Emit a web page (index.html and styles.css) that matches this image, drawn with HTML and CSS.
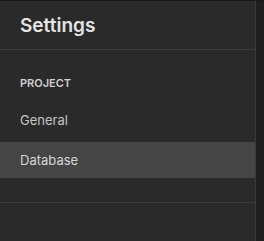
FILE: index.html
```html
<!DOCTYPE html>
<html lang="en">

<head>
    <meta charset="utf-8">
    <meta name="viewport" content="width=device-width, initial-scale=1.0">
    <title>Settings</title>
    <link rel="stylesheet" href="styles.css">
</head>

<body>

    <aside class="sidebar">
        <header class="sidebar_header">
            <h1>Settings</h1>
        </header>

        <nav class="menu">
            <h2 class="menu_label">Project</h2>
            <a class="menu_item" href="#">General</a>
            <a class="menu_item valgt" href="#">Database</a>
        </nav>
    </aside>

    <main class="content"></main>

</body></html>
```

FILE: styles.css
```css
* {
    box-sizing: border-box;
}

body {
    margin: 0;
    display: flex;
    min-height: 100vh;
    background: #1f1f1f;
    border-top: 1px solid #1a1a1a;
    font-family: 'Inter', sans-serif;
}

.sidebar {
    width: 256px;
    flex-shrink: 0;
    background: #2a2a2a;
    border-right: 1px solid #3b3b3b;
}

.sidebar_header {
    height: 49px;
    padding: 0 20px;
    display: flex;
    align-items: center;
    border-bottom: 1px solid #3b3b3b;
}

h1 {
    margin: 0;
    font-size: 19px;
    font-weight: 600;
    color: #e4e4e4;
}

.menu {
    display: flex;
    flex-direction: column;
    gap: 4px;
    padding: 25px 0 24px;
    border-bottom: 1px solid #3b3b3b;
}

.menu_label {
    margin: 0 0 7px;
    padding: 0 20px;
    font-size: 11px;
    line-height: 16px;
    font-weight: 600;
    text-transform: uppercase;
    color: #d0d0d0;
}

.menu_item {
    height: 36px;
    padding: 0 20px;
    display: flex;
    align-items: center;
    font-size: 13px;
    color: #c4c4c4;
    text-decoration: none;
}

.valgt {
    background: #454545;
    color: #d6d6d6;
}
```
